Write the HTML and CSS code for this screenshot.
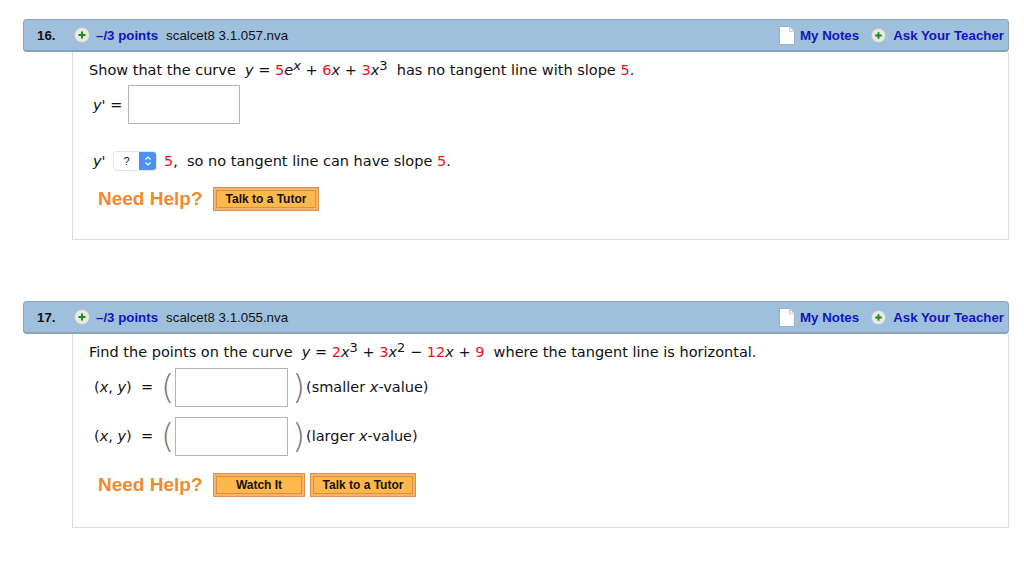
FILE: index.html
```html
<!DOCTYPE html>
<html lang="en">
<head>
    <meta charset="UTF-8">
    <meta name="viewport" content="width=device-width, initial-scale=1.0">
    <title>Questions</title>
    <link rel="stylesheet" href="styles.css">
</head>
<body>
    <!-- question 16 -->
    <div class="question">
        <div class="q-header">
            <span class="q-num">16.</span>
            <svg class="plus" viewBox="0 0 16 16"><circle cx="8" cy="8" r="7.5" fill="#e8e8e4" stroke="#bbb" stroke-width="0.6"/><path d="M8 4.5v7M4.5 8h7" stroke="#1a8a1a" stroke-width="2"/></svg>
            <span class="points">&ndash;/3 points</span>
            <span class="code">scalcet8 3.1.057.nva</span>
            <span class="links">
                <svg class="note" viewBox="0 0 16 19"><path d="M.5.5h10l5 5v13H.5z" fill="#fff" stroke="#9fb0c0"/><path d="M10.5.5v5h5" fill="#eee" stroke="#ccc"/></svg>
                <span class="link">My Notes</span>
                <svg class="plus ask" viewBox="0 0 16 16"><circle cx="8" cy="8" r="7.5" fill="#e8e8e4" stroke="#bbb" stroke-width="0.6"/><path d="M8 4.5v7M4.5 8h7" stroke="#1a8a1a" stroke-width="2"/></svg>
                <span class="link">Ask Your Teacher</span>
            </span>
        </div>
        <div class="q-body body-16">
            <p class="prompt">Show that the curve &nbsp;<i>y</i> = <b class="r">5</b><i>e<sup>x</sup></i> + <b class="r">6</b><i>x</i> + <b class="r">3</b><i>x</i><sup>3</sup> &nbsp;has no tangent line with slope <b class="r">5</b>.</p>
            <div class="answer-row">
                <span class="lhs"><i>y'</i> =</span>
                <span class="field"></span>
            </div>
            <div class="select-row">
                <i class="yp">y'</i>
                <span class="select"><span class="select-val">?</span><span class="select-arrows"><svg viewBox="0 0 8 12"><path d="M1.500 4.500 4 2l2.500 2.500M1.500 7.500 4 10l2.500-2.500" fill="none" stroke="#fff" stroke-width="1.200"/></svg></span></span>
                <span><b class="r">5</b>, &nbsp;so no tangent line can have slope <b class="r">5</b>.</span>
            </div>
            <div class="help">
                <span class="need">Need Help?</span>
                <a class="btn">Talk to a Tutor</a>
            </div>
        </div>
    </div>

    <!-- question 17 -->
    <div class="question second">
        <div class="q-header">
            <span class="q-num">17.</span>
            <svg class="plus" viewBox="0 0 16 16"><circle cx="8" cy="8" r="7.5" fill="#e8e8e4" stroke="#bbb" stroke-width="0.6"/><path d="M8 4.5v7M4.5 8h7" stroke="#1a8a1a" stroke-width="2"/></svg>
            <span class="points">&ndash;/3 points</span>
            <span class="code">scalcet8 3.1.055.nva</span>
            <span class="links">
                <svg class="note" viewBox="0 0 16 19"><path d="M.5.5h10l5 5v13H.5z" fill="#fff" stroke="#9fb0c0"/><path d="M10.5.5v5h5" fill="#eee" stroke="#ccc"/></svg>
                <span class="link">My Notes</span>
                <svg class="plus ask" viewBox="0 0 16 16"><circle cx="8" cy="8" r="7.5" fill="#e8e8e4" stroke="#bbb" stroke-width="0.6"/><path d="M8 4.5v7M4.5 8h7" stroke="#1a8a1a" stroke-width="2"/></svg>
                <span class="link">Ask Your Teacher</span>
            </span>
        </div>
        <div class="q-body body-17">
            <p class="prompt">Find the points on the curve &nbsp;<i>y</i> = <b class="r">2</b><i>x</i><sup>3</sup> + <b class="r">3</b><i>x</i><sup>2</sup> &minus; <b class="r">12</b><i>x</i> + <b class="r">9</b> &nbsp;where the tangent line is horizontal.</p>
            <div class="point-row">
                <span class="lhs-point">(<i>x</i>, <i>y</i>) &nbsp;=</span>
                <span class="paren">(</span><span class="field small"></span><span class="paren close">)</span>
                <span class="hint">(smaller <i>x</i>-value)</span>
            </div>
            <div class="point-row">
                <span class="lhs-point">(<i>x</i>, <i>y</i>) &nbsp;=</span>
                <span class="paren">(</span><span class="field small"></span><span class="paren close">)</span>
                <span class="hint">(larger <i>x</i>-value)</span>
            </div>
            <div class="help help-17">
                <span class="need">Need Help?</span>
                <a class="btn wide">Watch It</a>
                <a class="btn">Talk to a Tutor</a>
            </div>
        </div>
    </div>
</body>
</html>
```

FILE: styles.css
```css
body {
    margin: 0;
    padding: 19px 15px 0 23px;
    background-color: #fff;
    font-family: "DejaVu Sans", Verdana, sans-serif;
    font-size: 14.5px;
    color: #111;
}
.second {
    margin-top: 61px;
}
.q-header {
    display: flex;
    align-items: center;
    height: 30px;
    padding-left: 13px;
    background-color: #9fc0dc;
    border: 1px solid #8ba3b6;
    border-bottom-width: 2px;
    border-radius: 4px;
    font-family: "Liberation Sans", Arial, sans-serif;
    font-size: 13.3px;
}
.q-num {
    width: 37px;
    font-weight: bold;
}
.plus {
    width: 16px;
    height: 16px;
    margin-right: 6px;
}
.points {
    font-weight: bold;
    color: #1414b8;
    margin-right: 8px;
}
.links {
    display: flex;
    align-items: center;
    margin-left: auto;
    margin-right: 4px;
}
.link {
    font-weight: bold;
    color: #1414b8;
    white-space: nowrap;
}
.note {
    width: 16px;
    height: 19px;
    margin-right: 5px;
}
.ask {
    width: 15px;
    height: 15px;
    margin: 0 7px 0 12px;
}
.q-body {
    margin-left: 49px;
    padding-left: 16px;
    border: 1px solid #dcdcdc;
    border-top: 0;
}
.body-16 {
    height: 187px;
}
.body-17 {
    height: 193px;
}
.prompt {
    margin: 0;
    padding-top: 10px;
    line-height: 17px;
}
sup {
    font-size: 13px;
    line-height: 0;
    vertical-align: 5px;
}
.r {
    font-weight: normal;
    color: #f01020;
}
.answer-row {
    display: flex;
    align-items: center;
    margin-top: 6px;
}
.lhs {
    width: 35px;
    margin-left: 4px;
    white-space: nowrap;
}
.field {
    display: block;
    width: 110px;
    height: 37px;
    background-color: #fff;
    border: 1px solid #b4b4b4;
}
.select-row {
    display: flex;
    align-items: center;
    gap: 7px;
    margin: 27px 0 0 4px;
    height: 20px;
}
.yp {
    width: 13px;
}
.select {
    display: flex;
    width: 42px;
    height: 18px;
    border: 1px solid #e4e4e4;
    border-radius: 4px;
    overflow: hidden;
    font-family: "Liberation Sans", Arial, sans-serif;
    font-size: 11px;
}
.select-val {
    flex: 1;
    text-align: center;
    line-height: 18px;
}
.select-arrows {
    display: flex;
    align-items: center;
    justify-content: center;
    width: 17px;
    background-color: #4b91f0;
}
.select-arrows svg {
    width: 8px;
    height: 12px;
}
.help {
    display: flex;
    align-items: center;
    margin: 16px 0 0 9px;
}
.help-17 {
    margin-top: 17px;
}
.need {
    width: 115px;
    font-family: "Liberation Sans", Arial, sans-serif;
    font-size: 19px;
    font-weight: bold;
    color: #f08a30;
    white-space: nowrap;
}
.btn {
    display: block;
    box-sizing: border-box;
    width: 106px;
    height: 24px;
    margin-right: 5px;
    background-color: #ffb84c;
    border: 1px solid #d9914c;
    box-shadow: inset 0 0 0 2px #f8b26a, inset 0 0 0 3px #d8923f;
    font-family: "Liberation Sans", Arial, sans-serif;
    font-size: 12px;
    font-weight: bold;
    line-height: 22px;
    text-align: center;
    color: #111;
    white-space: nowrap;
}
.btn.wide {
    width: 92px;
}
.point-row {
    display: flex;
    align-items: center;
    height: 40px;
    margin: 6px 0 0 5px;
}
.point-row + .point-row {
    margin-top: 9px;
}
.lhs-point {
    width: 67px;
    white-space: nowrap;
}
.paren {
    width: 14px;
    font-size: 34px;
    font-weight: 200;
    line-height: 40px;
    color: #777;
}
.paren.close {
    margin-left: 4px;
}
.field.small {
    width: 111px;
    height: 37px;
}
.hint {
    margin-left: 0;
}
```
